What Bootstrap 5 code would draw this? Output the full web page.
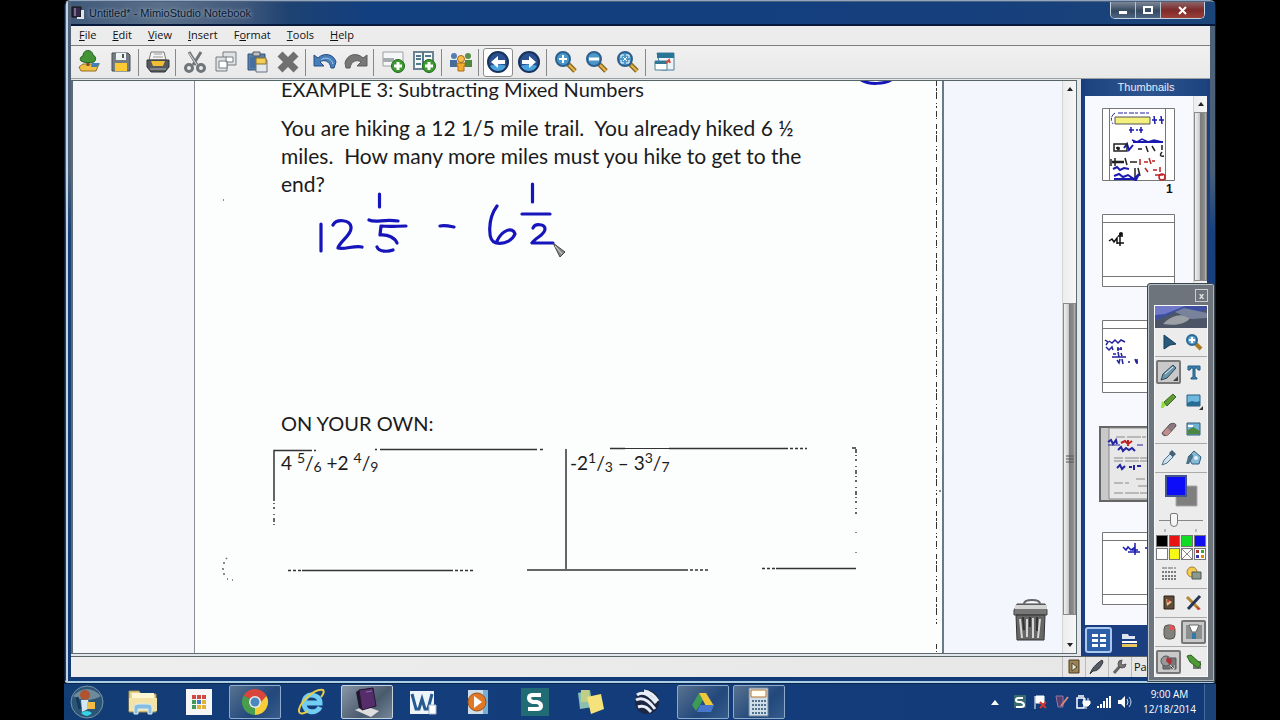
<!DOCTYPE html>
<html lang="en">
<head>
<meta charset="utf-8">
<meta name="viewport" content="width=device-width, initial-scale=1">
<title>Untitled* - MimioStudio Notebook</title>
<link href="https://cdn.jsdelivr.net/npm/bootstrap@5.3.0/dist/css/bootstrap.min.css" rel="stylesheet">
<style>
body{background:#000;font-family:"Open Sans","Noto Sans",sans-serif;font-size:11px;color:#111}
button{border:0;background:none;padding:0;display:flex;align-items:center;justify-content:center;flex:none;color:inherit}
svg{display:block;flex:none}
.desk{padding:0 64px;height:100vh;min-height:560px}
/* application window */
.appwin{background:linear-gradient(90deg,transparent 1px,#c3d2e0 1px,#c3d2e0 3px,transparent 3px),linear-gradient(#4e6178,#4a6079 25%,#17407c 34%,#123a76);border:1px solid #0b1d36;border-top-color:#8fa5c4;border-bottom:2px solid #a9cfe6;border-radius:6px 6px 4px 4px;padding:1px 5px 4px 6px;min-height:0}
.titlebar{height:25px;background:linear-gradient(90deg,#41597a,#5a7089 8%,#41597c 15%,#1e4272 19%,#123f7f 26%,#153f7d 75%,#1b4478);border-bottom:2px solid #071a3c;margin-right:-5px}
.titletext{color:#0a1830;font:11px/22px "Liberation Sans",sans-serif;text-shadow:0 0 3px #8fa3b8,0 0 4px #8fa3b8}
.winctl{border:1px solid #c5d2e0;border-top:0;border-radius:0 0 5px 5px;height:17px;margin-right:10px;align-self:flex-start;overflow:hidden}
.winctl button{width:25px;height:16px;background:linear-gradient(#7c8796,#35485f 55%,#4e6480);border-right:1px solid #b5c2d0}
.winctl button:last-child{width:43px;border:0;background:linear-gradient(#8a6468,#7e2a2a 50%,#9a4038)}
.menus{height:20px;background:#ececec;border-bottom:1px solid #7d7d7d}
.menus a{padding:0 8px;color:#111;text-decoration:none;line-height:18px;font-size:11px;font-weight:500}
.tools{height:34px;background:linear-gradient(#f0f0f0,#e9e9e9);border-bottom:1px solid #9aa0a0}
.tools button{width:30px;height:29px;border-radius:3px;margin-right:1px}
.tools .pressed{background:#fff;border:1px solid #8c8c8c}
.rule{width:1px;height:27px;background:#888;margin:0 4px 0 1px}
.workarea{background:#e3e7ec;min-height:0}
.board{border:1px solid #5c6c70;border-width:1px 1px 1px 2px;border-top-color:#556565;background:#f4f7fc;min-width:0;margin:1px 4px 2px 0}
.leftpad{width:122px;border-right:1px solid #8a8e96;background:#f4f6fa}
.rightpad{width:120px;border-left:2px solid #6a7986;background:#f3f6fd}
.sheet{background:#fcfdfd;overflow:hidden;min-width:0;padding-left:78px;font-family:Lato,"Open Sans",sans-serif;color:#1b1b1b;font-size:20px}
.sheet h1,.sheet h2,.sheet p{font-size:20px;font-weight:400;margin:0;line-height:28px;padding-left:8px;white-space:pre}
.sheet h1{line-height:16px}
.sheet p{margin-top:17px;font-size:21px}
.sheet h2{margin-top:211px;margin-bottom:12px}
.tasks{width:582px}
.tasks div{width:50%;padding-left:8px;height:122px;line-height:28px;font-size:19px;white-space:pre}
.tasks .second{padding-left:6px}
.tasks sup,.tasks sub{font-size:14px;line-height:0}
.tasks sub{bottom:-2px}
.overlay{position:absolute;left:0;top:0}
.vbar{width:14px;background:linear-gradient(90deg,#ededed,#f6f6f6);border-left:1px solid #d5d5d5}
.vbar .btn-arrow{height:16px;width:100%}
.vbar .grip{background:linear-gradient(90deg,#f0f0f0 0,#cfcfcf 40%,#7d7d7d 50%,#8c8c8c 85%,#bbb);border:1px solid #8a8a8a}
.sidepanel{width:129px;background:#1b3e80;padding:0 3px 0 3px;border-left:1px solid #24346e}
.sidetitle{height:17px;line-height:17px;color:#e4edfa;font:500 11px/17px "Liberation Sans",sans-serif;background:linear-gradient(90deg,#1d437f,#2f5590,#1d437f)}
.list{background:#f7f9fe;overflow:hidden;min-height:0}
.thumbs{padding:12px 0 0 17px}
.thumbs figure{margin:0;height:106px}
.thumbs figcaption{font:bold 12px/16px "Liberation Sans",sans-serif;padding-left:64px}
.paneltabs{height:31px}
.paneltabs button{width:27px;height:26px;border-radius:3px}
.paneltabs .chosen{background:#2d5ea8;border:2px solid #a9c8ee}
.statusbar{height:22px;background:linear-gradient(90deg,#eee,#e6e6e6);border-top:1px solid #5c6468;padding-right:61px}
.statusbar button,.statusbar span{border-left:1px solid #bbb}
.statusbar button{width:23px;height:20px}
.statusbar span{width:18px;padding-left:2px;line-height:20px;font-size:11px}
/* floating palette */
.kit{position:absolute;right:0;bottom:-1px;width:68px;padding:2px 6px 4px 6px;background:#6d747b;border:1px solid #3c444c;box-shadow:inset 1px 1px 0 #b7c0c6,inset -1px -1px 0 #aab4bb;border-radius:3px 3px 0 0}
.kithead{height:19px}
.kithead button{width:13px;height:13px;border:1px solid #ccc;color:#eee;font:bold 9px/10px "Liberation Sans",sans-serif}
.kitbody{background:#ececec;border:1px solid #fafafa}
.pair{height:29px;padding:0 1px;display:flex;justify-content:space-around;align-items:center}
.pair button{width:25px;height:24px}
.line-under{border-bottom:1px solid #aaa}
.down{background:#c9c9c9;border:2px solid #777!important;border-radius:2px}
.swatches{display:grid;grid-template-columns:repeat(4,1fr);gap:1px;padding:0 1px;height:25px}
.swatches button{height:12px;width:100%;border:1px solid #777}
.kit input[type=range]{appearance:none;width:44px;height:14px;background:linear-gradient(#888,#888) center/100% 1px no-repeat;margin:0 auto;display:block}
.kit input[type=range]::-webkit-slider-thumb{appearance:none;width:8px;height:14px;border:1px solid #777;border-radius:2px 2px 4px 4px;background:#f5f5f5}
/* taskbar */
.taskbar{height:37px;background:linear-gradient(90deg,#123c74,#143d7b 30%,#123a78);border-top:1px solid #0c2548;color:#fff}
.taskbar .apps button{width:52px;height:34px;margin-right:4px;border-radius:2px}
.taskbar .apps .running{border:1px solid #8fa9c9;background:linear-gradient(135deg,#59728f,#22487c 60%,#355c8c)}
.taskbar .apps .front{border:1px solid #c7d2de;background:linear-gradient(135deg,#8797a8,#4a5a6d 60%,#77879a)}
.tray button{width:21px;height:30px}
.clock{width:69px;font-size:10px;line-height:15px;text-align:center}
.peek{width:12px;border-left:1px solid #4a6a9c;background:#1c4379}
</style>
</head>
<body>
<div class="desk d-flex flex-column">
<main class="appwin position-relative d-flex flex-column flex-grow-1">
  <header class="titlebar d-flex align-items-center">
    <svg width="14" height="14" viewBox="0 0 14 14" class="me-1"><path d="M1 1h9v10H1z" fill="#35284a" stroke="#111"/><path d="M4 2v8" stroke="#b9b3c9"/><path d="M10 4h3v9H6v-2h4z" fill="#dfe4ea"/></svg>
    <div class="titletext flex-grow-1">Untitled* - MimioStudio Notebook</div>
    <div class="winctl d-flex">
      <button aria-label="Minimize"><svg width="10" height="8"><path d="M1 5h8v3H1z" fill="#fff"/></svg></button>
      <button aria-label="Maximize"><svg width="10" height="8"><path d="M1 1h8v6H1z" fill="none" stroke="#fff" stroke-width="2"/></svg></button>
      <button aria-label="Close"><svg width="10" height="9"><path d="M1 1l7 7M8 1L1 8" stroke="#fff" stroke-width="2"/></svg></button>
    </div>
  </header>
  <nav class="menus d-flex">
    <a href="#"><u>F</u>ile</a><a href="#"><u>E</u>dit</a><a href="#"><u>V</u>iew</a><a href="#"><u>I</u>nsert</a><a href="#">F<u>o</u>rmat</a><a href="#"><u>T</u>ools</a><a href="#"><u>H</u>elp</a>
  </nav>
  <div class="tools d-flex align-items-center ps-1">
    <button aria-label="Open"><svg width="24" height="24" viewBox="0 0 24 24"><path d="M1 17l4-3h16l-3 7H3z" fill="#f2bf45" stroke="#94702a"/><path d="M14 13h8l-3 4h-6z" fill="#3f7fb5"/><path d="M10 10v6" stroke="#7b5322" stroke-width="3"/><path d="M3 11a3 3 0 0 1 2-5 5 5 0 0 1 10-1 4 4 0 0 1 1 7c-4 1-10 1-13-1z" fill="#429434" stroke="#226322"/></svg></button>
    <button aria-label="Save"><svg width="24" height="24" viewBox="0 0 24 24"><path d="M3 3h16l2 2v16H3z" fill="#747b82" stroke="#484e55"/><path d="M7 3h10v7H7z" fill="#eef3f5"/><path d="M13 4h2v4h-2z" fill="#555"/><path d="M6 13h12v8H6z" fill="#fac933"/></svg></button>
    <span class="rule"></span>
    <button aria-label="Print"><svg width="24" height="24" viewBox="0 0 24 24"><path d="M5 2h13l2 8H3z" fill="#f4f4f4" stroke="#777"/><path d="M8 4h8M7 7h10" stroke="#999"/><path d="M1 10h22v7l-4 5H5l-4-5z" fill="#55595e" stroke="#303438"/><path d="M5 11h14l-2 5H7z" fill="#f0bd35"/><path d="M4 19h16" stroke="#a9b0b5"/></svg></button>
    <span class="rule"></span>
    <button aria-label="Cut"><svg width="24" height="24" viewBox="0 0 24 24" fill="none" stroke="#70757a"><path d="M6 2l8 13M18 2l-8 13" stroke-width="3"/><path d="M6 3l8 12" stroke="#ddd"/><circle cx="6" cy="18" r="3.5" stroke-width="3"/><circle cx="18" cy="18" r="3.5" stroke-width="3"/></svg></button>
    <button aria-label="Copy"><svg width="24" height="24" viewBox="0 0 24 24" fill="#dfe2e4" stroke="#777d82"><path d="M9 2h13v13H9z"/><path d="M2 7h11v14H2z"/><path d="M5 11h8v7H5zM12 7h7v5h-7z" fill="#fff"/></svg></button>
    <button aria-label="Paste"><svg width="24" height="24" viewBox="0 0 24 24"><path d="M3 4h17v16H3z" fill="#5a7fab" stroke="#34557e"/><path d="M8 2h7v4H8z" fill="#bbc4cc" stroke="#555"/><path d="M5 7h8v11H5z" fill="#466e9f"/><path d="M11 10h11v12H11z" fill="#e3e8ec" stroke="#68727c"/><path d="M11 8h10v6H11z" fill="#f3cd56" stroke="#86702c"/></svg></button>
    <button aria-label="Delete"><svg width="24" height="24" viewBox="0 0 24 24"><path d="M4 4l16 16M20 4L4 20" stroke="#707070" stroke-width="7"/></svg></button>
    <span class="rule"></span>
    <button aria-label="Undo"><svg width="24" height="24" viewBox="0 0 24 24"><path d="M1 5v11h10l-4-4c4-3 10-1 11 6h3l2-6C21 4 11 2 5 8z" fill="#477fba" stroke="#264f83"/><path d="M8 10c5-4 11-1 12 4" stroke="#a8caea" fill="none"/></svg></button>
    <button aria-label="Redo"><svg width="24" height="24" viewBox="0 0 24 24"><path d="M23 5v11H13l4-4c-4-3-10-1-11 6H2l-1-5C3 4 13 2 19 8z" fill="#777" stroke="#5d5d5d"/></svg></button>
    <span class="rule"></span>
    <button aria-label="New page"><svg width="24" height="24" viewBox="0 0 24 24"><path d="M2 2h20v14H2z" fill="#f5f7f8" stroke="#9ba1a5"/><path d="M2 8h11v4H2z" fill="#a5adb1"/><circle cx="17" cy="16" r="6.5" fill="#3f992f" stroke="#1b691b"/><path d="M17 12v8M13 16h8" stroke="#fff" stroke-width="3"/></svg></button>
    <button aria-label="Page layout"><svg width="24" height="24" viewBox="0 0 24 24"><path d="M2 2h19v17H2z" fill="#f7f8f9" stroke="#6e8392" stroke-width="2"/><path d="M11 2v17M4 6h5M4 9h5M13 6h6M4 14h5" stroke="#54798e" stroke-width="2"/><circle cx="17" cy="16" r="6.5" fill="#3f992f" stroke="#1b691b"/><path d="M17 12v8M13 16h8" stroke="#fff" stroke-width="3"/></svg></button>
    <span class="rule"></span>
    <button aria-label="Teams"><svg width="24" height="24" viewBox="0 0 24 24"><circle cx="5" cy="6" r="3" fill="#547eb2"/><path d="M1 10h7v7H1z" fill="#426c9e"/><circle cx="19" cy="6" r="3" fill="#58914b"/><path d="M16 10h7v7h-7z" fill="#4f873b"/><circle cx="12" cy="9" r="3.5" fill="#f9bb4a" stroke="#a56c16"/><path d="M8 13h8v3h-1v5H9v-5H8z" fill="#f4ab2d" stroke="#a56c16"/></svg></button>
    <span class="rule"></span>
    <button class="pressed" aria-label="Previous"><svg width="24" height="24" viewBox="0 0 24 24"><circle cx="12" cy="12" r="10" fill="#2a5090" stroke="#17335e" stroke-width="2"/><path d="M4 16a9 9 0 0 0 16 0c-5-2-11-2-16 0z" fill="#4aa3dc"/><path d="M5 12l7-6v4h7v4h-7v4z" fill="#fff"/></svg></button>
    <button aria-label="Next"><svg width="24" height="24" viewBox="0 0 24 24"><circle cx="12" cy="12" r="10" fill="#2a5090" stroke="#17335e" stroke-width="2"/><path d="M4 16a9 9 0 0 0 16 0c-5-2-11-2-16 0z" fill="#4aa3dc"/><path d="M19 12l-7-6v4H5v4h7v4z" fill="#fff"/></svg></button>
    <span class="rule"></span>
    <button aria-label="Zoom in"><svg width="24" height="24" viewBox="0 0 24 24"><path d="M14 14l7 7" stroke="#8c6a26" stroke-width="5"/><path d="M15 15l6 6" stroke="#e5b64b" stroke-width="2"/><circle cx="9" cy="9" r="7" fill="#4c97c9" stroke="#2c5f8d" stroke-width="2"/><path d="M9 5v8M5 9h8" stroke="#fff" stroke-width="2"/></svg></button>
    <button aria-label="Zoom out"><svg width="24" height="24" viewBox="0 0 24 24"><path d="M14 14l7 7" stroke="#8c6a26" stroke-width="5"/><path d="M15 15l6 6" stroke="#e5b64b" stroke-width="2"/><circle cx="9" cy="9" r="7" fill="#4c97c9" stroke="#2c5f8d" stroke-width="2"/><path d="M4 9h10" stroke="#fff" stroke-width="3"/></svg></button>
    <button aria-label="Zoom to fit"><svg width="24" height="24" viewBox="0 0 24 24"><path d="M14 14l7 7" stroke="#8c6a26" stroke-width="5"/><path d="M15 15l6 6" stroke="#e5b64b" stroke-width="2"/><circle cx="9" cy="9" r="7" fill="#4c97c9" stroke="#2c5f8d" stroke-width="2"/><path d="M5 8V5h3M10 5h3v3M13 10v3h-3M8 13H5v-3M7 7l4 4M11 7l-4 4" stroke="#fff" fill="none"/></svg></button>
    <span class="rule"></span>
    <button aria-label="Screen view"><svg width="24" height="24" viewBox="0 0 24 24"><path d="M4 3h17v17H8z" fill="#eef4f6" stroke="#4b7f9d"/><path d="M4 3h17v5H4z" fill="#287597"/><path d="M2 11h12v9H2z" fill="#fff" stroke="#4b8299"/><path d="M2 11h12v3H2z" fill="#2e7898"/><path d="M13 13l3-3 1 3" stroke="#d64a3a" fill="none" stroke-width="2"/></svg></button>
  </div>
  <div class="workarea d-flex flex-grow-1">
    <section class="board position-relative d-flex flex-grow-1">
      <div class="leftpad flex-shrink-0"></div>
      <article class="sheet position-relative flex-grow-1">
        <h1>EXAMPLE 3: Subtracting Mixed Numbers</h1>
        <p>You are hiking a 12 1/5 mile trail.  You already hiked 6 ½
miles.  How many more miles must you hike to get to the
end?</p>
        <h2>ON YOUR OWN:</h2>
        <div class="tasks d-flex"><div>4 <sup>5</sup>/<sub>6</sub> +2 <sup>4</sup>/<sub>9</sub></div><div class="second">-2<sup>1</sup>/<sub>3</sub> – 3<sup>3</sup>/<sub>7</sub></div></div>
        <svg class="overlay" width="746" height="572" viewBox="195 82 746 572" fill="none">
          <g stroke="#333" stroke-width="1.5">
            <path d="M274 498V451.500H312M380 450.500H537M566 450V570M610 449.500H625M669 449.500H785M302 571.500H450M527 571H685M776 569.500H856M852 449h4"/>
            <path d="M314 451.500h2M375 450.500h2M540 450.500h4M450 571.500h24M685 571h24M762 569.500h14M785 449.500h22M288 571.500h14" stroke-dasharray="3 2"/>
            <path d="M625 449.500H669" stroke-width="1"/>
            <path d="M274 498v30M856 450v65" stroke-dasharray="4 2 1 3 2 5 1 3"/>
            <path d="M856 533v1M856 553v1M226 559l1 1M223 564h2M222 570h2M223 575h2M227 580h1M232 581h1M223 201h1M939 492h2" stroke="#666"/>
            <path d="M936.500 82V626M936.500 645v8" stroke-width="1" stroke-dasharray="5 2 3 1 7 4 1 2 2 3 6 1 1 5"/>
          </g>
          <g stroke="#1614bb" stroke-width="3.200" stroke-linecap="round" stroke-linejoin="round">
            <path d="M321 225v27M333 226c3-6 17-6 18 2 1 8-11 14-13 21 6 2 17-3 24-1M379.500 195v13M369 221c7 3 14-1 29 1M406 227c-9 0-15 1-25 0l-1 9c8-1 15 3 17 8M377 248c2 5 11 5 16 3M440 227c5-1 9 0 14 1M497 207c-9 12-10 35-1 37 10 2 17-4 19-9-2-8-13-4-18 7M532.500 185v18M522 215h28M533 229c2-5 12-4 12 1 0 6-9 8-13 14h21"/>
            <path d="M861 81c8 5 24 4 30 0" stroke-width="3"/>
          </g>
          <path d="M553 244l12 9-5 5z" fill="#888" stroke="#444"/><path d="M555 247l7 8" stroke="#ddd"/>
        </svg>
      </article>
      <div class="rightpad flex-shrink-0"></div>
      <svg class="position-absolute bottom-0 end-0 me-4 mb-2" width="42" height="46" viewBox="0 0 42 46"><path d="M6 8l1-3h28l2 6v5H4v-5z" fill="#777" stroke="#444"/><path d="M14 5q0-4 8-4t8 4" fill="none" stroke="#666" stroke-width="2"/><path d="M5 6h32v4H5z" fill="#d5d5d5"/><path d="M6 16h29l-1 25H7z" fill="#666" stroke="#333"/><path d="M10 20l2 19M17 20v18M23 19v20M30 20l-2 19" stroke="#d6d6d6" stroke-width="2"/><path d="M13 18l1 13M20 18v10M27 18v14" stroke="#333" stroke-width="2"/></svg>
      <div class="vbar flex-shrink-0 d-flex flex-column">
        <button class="btn-arrow" aria-label="Scroll up"><svg width="6" height="4"><path d="M0 4l3-4 3 4z" fill="#222"/></svg></button>
        <div style="flex:206"></div><div class="grip d-flex align-items-center justify-content-center" style="flex:311"><svg width="8" height="8"><path d="M0 1h8M0 4h8M0 7h8" stroke="#555"/></svg></div><div style="flex:22"></div>
        <button class="btn-arrow" aria-label="Scroll down"><svg width="6" height="4"><path d="M0 0h6L3 4z" fill="#222"/></svg></button>
      </div>
    </section>
    <aside class="sidepanel d-flex flex-column flex-shrink-0">
      <div class="sidetitle text-center">Thumbnails</div>
      <div class="list d-flex flex-grow-1">
        <div class="thumbs flex-grow-1">
          <figure><svg width="73" height="73" viewBox="0 0 73 73"><path d="M.5.500h72v72H.5zM7.500 0v73M63.500 0v73" fill="#fff" stroke="#777"/><path d="M13 9h35v7H13z" fill="#f4f07e" stroke="#555"/><path d="M13 5q-6 4-2 11M16 5h32" stroke="#229" fill="none" stroke-dasharray="5 1 3 2"/><g stroke="#1a1ab0" stroke-width="1.500" fill="none"><path d="M50 12h5M52 8l1 8M57 12h5M59 8l1 8M27 22h5M29 19v6M34 22h2M37 22h4M39 19v6"/><path d="M31 34h30M22 40l3-4 2 6 4-5M11 61l4-2 3 3 4-2 5 1M12 68l5-2 4 3 5-2 6 4 5-5-3 6-6-2M12 71h20" stroke-width="2"/><path d="M30 32l5 2 5-3 6 3 6-2 8 2"/></g><g stroke="#222" stroke-width="1.500" fill="none"><path d="M12 36h13v7H12zM14 40h4M36 41h4M44 38l2 6M50 38l3 5M60 37v5M9 51v7M13 50v8M17 54h4M23 50l2 7M28 54h7M33 60v9M36 60l2 8M60 44q-4 5 2 4"/><path d="M15 39l2 3M10 54h12" stroke-width="2.500"/></g><g stroke="#b22" stroke-width="1.500" fill="none"><path d="M38 51v6M42 54h4M47 50l2 6M50 53h3M43 60l3 4M51 62h4M58 59v5M53 67h8"/><circle cx="60" cy="69" r="3"/></g></svg><figcaption>1</figcaption></figure>
          <figure><svg width="73" height="73" viewBox="0 0 73 73"><path d="M.5.500h72v72H.5zM0 8.500h73M0 62.500h73" fill="#fff" stroke="#777"/><path d="M7 27l3-2 2 3 3-4v6M16 22h5M18 19v13M15 29h7" stroke="#111" fill="none" stroke-width="1.500"/><circle cx="19" cy="20" r="2" fill="#111"/></svg></figure>
          <figure><svg width="73" height="73" viewBox="0 0 73 73"><path d="M.5.500h72v72H.5zM0 8.500h73M0 62.500h73" fill="#fff" stroke="#777"/><path d="M3 20l3 2-2 3M7 21l3 2 3-3 3 3 3-3 4 2M4 27l3 3 3-3 1 3M16 27v4M19 27v3M15 29h5M11 34h3M16 32l1 5M19 33l1 3M10 37h14M15 40l2 3 1-4M20 39l1 5M26 42h2M33 39l1 3h2M35 39v5" stroke="#229" stroke-width="1.500" fill="none"/></svg></figure>
          <figure><svg width="76" height="76" viewBox="3 1 76 76" style="margin-left:-3px"><path d="M4 2h75v74H4z" fill="#c9c9c9" stroke="#666" stroke-width="2"/><path d="M13 3h66v71H13z" fill="#e8e8e8" stroke="#888"/><path d="M20 12h30M18 33h60M18 36h60M18 58h15M18 68h55M40 54h30M42 61h30" stroke="#888" stroke-dasharray="9 2 14 1"/><path d="M12 17l3-2 2 4 3-4 1 4M22 25l3-3 2 4 3-3 3 2 3-2 3 3M21 43l3-3 2 4 3-3M33 42h3M38 40v5M41 41h4" stroke="#2525a0" stroke-width="2" fill="none"/><path d="M12 20h12M41 20h6" stroke="#2525a0"/><path d="M25 18l4-2 3 3 4-3M32 15v6" stroke="#b22" stroke-width="2" fill="none"/></svg></figure>
          <figure><svg width="73" height="73" viewBox="0 0 73 73"><path d="M.5.500h72v72H.5zM0 8.500h73M0 62.500h73" fill="#fff" stroke="#777"/><path d="M21 15l3 3 2-3 3 3 4-3M26 20h12M33 11v12M30 18h6M43 16h2" stroke="#1a1ab0" fill="none" stroke-width="1.500"/></svg></figure>
        </div>
        <div class="vbar flex-shrink-0 d-flex flex-column"><button class="btn-arrow" aria-label="Scroll up"><svg width="6" height="4"><path d="M0 4l3-4 3 4z" fill="#222"/></svg></button><div class="grip" style="flex:165"></div><div style="flex:342"></div></div>
      </div>
      <div class="paneltabs d-flex align-items-center gap-1">
        <button class="chosen" aria-label="Thumbnails"><svg width="16" height="14"><path d="M1 1h6v3H1zM9 1h6v3H9zM1 6h6v3H1zM9 6h6v3H9zM1 11h6v3H1zM9 11h6v3H9z" fill="#fff"/></svg></button>
        <button aria-label="Gallery"><svg width="18" height="16"><path d="M1 2h6l1 2h6v3H1z" fill="#dbe4f0"/><path d="M1 9h15v2H1z" fill="#fff"/><path d="M1 12h15v3H1z" fill="#e9c55d"/></svg></button>
      </div>
    </aside>
  </div>
  <footer class="statusbar d-flex justify-content-end align-items-center">
    <button aria-label="Notebook"><svg width="14" height="16"><path d="M2 1h10v13H2z" fill="#9a8357" stroke="#4d3d20"/><path d="M5 4l5 4-5 4z" fill="#f1e6c5" stroke="#443"/></svg></button>
    <button aria-label="Pen"><svg width="16" height="16"><path d="M1 15c2-6 6-10 12-14l1 2c-3 7-6 9-10 9z" fill="#545b68" stroke="#333"/></svg></button>
    <button aria-label="Settings"><svg width="16" height="16"><path d="M2 14l7-8" stroke="#666" stroke-width="3"/><path d="M14 5a4 4 0 1 1-4-4l-1 4 2 1z" fill="#777" stroke="#555"/></svg></button>
    <span>Pa</span>
  </footer>

  <section class="kit" aria-label="Tools">
    <div class="kithead d-flex justify-content-end align-items-center"><button aria-label="Close tools">x</button></div>
    <div class="kitbody">
      <svg width="100%" height="22" viewBox="0 0 52 22" preserveAspectRatio="none"><path d="M0 0h52v22H0z" fill="#3f4fa0"/><path d="M0 0h30L10 8 0 9z" fill="#7078c8"/><path d="M0 22V15l20-9 16 5 16-8v19z" fill="#4c5566"/><path d="M8 18c8-9 20-11 27-6-4 6-14 8-27 6z" fill="#9aa0a4"/><path d="M20 6l9-4 23 5v5l-16 1z" fill="#78829a"/></svg>
      <div class="pair line-under"><button aria-label="Select"><svg width="18" height="18"><path d="M4 2l12 9-6 1-6 4z" fill="#285a7c" stroke="#173c58"/></svg></button><button aria-label="Zoom"><svg width="18" height="18"><path d="M10 10l6 6" stroke="#a87a25" stroke-width="4"/><circle cx="7" cy="7" r="5" fill="#5fa8d4" stroke="#2c6796" stroke-width="2"/><path d="M7 4v6M4 7h6" stroke="#fff" stroke-width="2"/></svg></button></div>
      <div class="pair"><button class="down" aria-label="Pen"><svg width="20" height="20"><path d="M2 18l2-6L14 3l3 3L8 16z" fill="#6e96aa" stroke="#294758"/><path d="M6 12l8-7" stroke="#e5f2f7"/><path d="M19 14v5h-5z" fill="#444"/></svg></button><button aria-label="Text"><svg width="18" height="18"><path d="M3 3h12v4h-2l-1-2h-2v9l2 1v1H6v-1l2-1V5H6L5 7H3z" fill="#3d82b0" stroke="#225b85"/></svg></button></div>
      <div class="pair"><button aria-label="Highlighter"><svg width="18" height="18"><path d="M2 9l4 4-3 3H1z" fill="#8fe03a"/><path d="M4 10L13 2l3 3-9 9z" fill="#5f9c35" stroke="#3c6a22"/></svg></button><button aria-label="Shape"><svg width="18" height="18"><path d="M2 3h13v11H2z" fill="#6db8dc" stroke="#2b5f82"/><path d="M2 11l5-2 4 1 4-1v5H2z" fill="#286b94"/><path d="M18 14v4h-4z" fill="#333"/></svg></button></div>
      <div class="pair line-under"><button aria-label="Eraser"><svg width="18" height="18"><path d="M2 13l8-9q6-2 6 2l-8 9q-5 2-6-2z" fill="#8a7a80" stroke="#5b5055"/><path d="M3 13l4-5 4 4-4 4z" fill="#c38d90"/></svg></button><button aria-label="Picture"><svg width="18" height="18"><path d="M2 3h13v12H2z" fill="#6fb2d8" stroke="#355d70"/><path d="M3 10l5-3 7 4v3H3z" fill="#4c8640"/><path d="M3 5h5v2H3z" fill="#fff"/></svg></button></div>
      <div class="pair line-under"><button aria-label="Colour picker"><svg width="18" height="18"><path d="M2 16l2-5 6-6 3 3-6 6z" fill="#cde2ec" stroke="#4d7188"/><path d="M9 4l3-3 4 4-3 3z" fill="#42617a"/></svg></button><button aria-label="Fill"><svg width="18" height="18"><path d="M3 8l6-6 7 6-2 7H7z" fill="#86b9d6" stroke="#31617f"/><path d="M3 8q5-6 5 0l-4 7H1z" fill="#4b7289"/><circle cx="11" cy="9" r="2" fill="#e7f3fa"/></svg></button></div>
      <svg class="mx-auto" width="50" height="40" viewBox="0 0 50 40"><path d="M20 13h21v20H20z" fill="#7f7f7f" stroke="#aaa"/><path d="M10 3h20v20H10z" fill="#0d0dfa" stroke="#46568d" stroke-width="2"/></svg>
      <input type="range" min="0" max="10" value="3" aria-label="Line thickness">
      <svg class="mx-auto" width="44" height="8"><path d="M6 2v3M37 2v3" stroke="#888"/></svg>
      <div class="swatches"><button style="background:#000" aria-label="Black"></button><button style="background:#e81313" aria-label="Red"></button><button style="background:#0fdc23" aria-label="Green"></button><button style="background:#1010ee" aria-label="Blue"></button><button style="background:#fff" aria-label="White"></button><button style="background:#f8f814" aria-label="Yellow"></button><button style="background:#fff" aria-label="No colour"><svg width="10" height="10"><path d="M0 0l10 10M10 0L0 10" stroke="#888"/></svg></button><button style="background:#fff" aria-label="More colours"><svg width="10" height="10"><path d="M1 1h3v3H1z" fill="#a33"/><path d="M6 1h3v3H6z" fill="#3a3"/><path d="M1 6h3v3H1z" fill="#33a"/><path d="M6 6h3v3H6z" fill="#e80"/></svg></button></div>
      <div class="pair line-under"><button aria-label="Line style"><svg width="18" height="16"><path d="M2 2h14" stroke="#666" stroke-dasharray="5 1"/><path d="M2 6h14M2 10h14M2 13h14" stroke="#555" stroke-width="1.500" stroke-dasharray="2 1"/></svg></button><button aria-label="Arrange"><svg width="18" height="18"><circle cx="7" cy="7" r="5" fill="#f4cb51" stroke="#a78028"/><path d="M7 7h9v7H7z" fill="#8b9a8e" stroke="#4c584e"/></svg></button></div>
      <div class="pair line-under"><button aria-label="Gallery"><svg width="18" height="18"><path d="M4 2h10v13H4z" fill="#5e4c39" stroke="#2c2219"/><path d="M6 5l6 3-5 4z" fill="#e3c38a"/><circle cx="8" cy="7" r="1.500" fill="#c44"/></svg></button><button aria-label="Applications"><svg width="18" height="18"><path d="M2 3l12 12" stroke="#b18731" stroke-width="3"/><path d="M15 2L3 15" stroke="#273556" stroke-width="3"/><path d="M11 12l5 3-3 1z" fill="#c33"/></svg></button></div>
      <div class="pair line-under"><button aria-label="Mouse"><svg width="18" height="18"><rect x="4" y="2" width="11" height="14" rx="4" fill="#83817c" stroke="#555"/><path d="M9 2h3q3 1 3 5H9z" fill="#d55"/></svg></button><button class="down" aria-label="Spotlight"><svg width="20" height="18"><path d="M2 2h16v14H2z" fill="#8b8f90"/><path d="M5 2h10l-3 7H8z" fill="#fff" stroke="#666"/><path d="M8 10h4v6H8z" fill="#317ba5"/></svg></button></div>
      <div class="pair"><button class="down" aria-label="Record"><svg width="20" height="18"><path d="M4 5h13v11H4z" fill="#777" stroke="#555"/><circle cx="7" cy="8" r="5" fill="#999" stroke="#555"/><path d="M8 4l5 3-2 5-4-4z" fill="#b32e35"/><path d="M11 12l4 4M15 12v4h-4" stroke="#ddd"/></svg></button><button aria-label="Capture"><svg width="18" height="18"><path d="M8 8h8v8H8z" fill="#777"/><path d="M2 3l4-1 10 9-3 4-8-6z" fill="#4e9a35" stroke="#2c641d"/></svg></button></div>
    </div>
  </section>
</main>

<footer class="taskbar d-flex flex-shrink-0 align-items-stretch">
  <div class="apps d-flex flex-grow-1 align-items-center">
    <button style="margin-left:-3px" aria-label="Start"><svg width="36" height="34"><circle cx="18" cy="17" r="16" fill="#2b5577" stroke="#7893a5"/><path d="M4 11q14-14 28 0-14 8-28 0z" fill="#708a9a"/><circle cx="16" cy="10" r="5" fill="#b0532e"/><path d="M12 15h7l2 8-8 4z" fill="#d5e7f2"/><path d="M18 17h8v7h-8z" fill="#f1bd45"/><path d="M12 28q6-4 11 0-5 6-11 0z" fill="#35d4e8"/><path d="M8 12l3 12" stroke="#173857" stroke-width="3"/></svg></button>
    <button aria-label="Explorer"><svg width="32" height="30"><path d="M2 4h10l2 3h15v18H2z" fill="#ead693" stroke="#a9914c"/><path d="M5 6h22v6H5z" fill="#fff7d2"/><path d="M2 11h28v13H2z" fill="#f3e3a6"/><path d="M7 27v-7q0-3 4-3h10q4 0 4 3v7h-4v-5H11v5z" fill="#87bedf" stroke="#d8effa"/></svg></button>
    <button aria-label="Apps"><svg width="26" height="26"><path d="M0 0h26v26H0z" fill="#f6f6f6"/><path d="M6 6h4v4H6zM11 6h4v4h-4zM16 6h4v4h-4z" fill="#cf4a42"/><path d="M6 11h4v4H6z" fill="#46995a"/><path d="M11 11h4v4h-4z" fill="#457cc4"/><path d="M16 11h4v4h-4z" fill="#ddb43a"/><path d="M6 16h4v4H6z" fill="#46995a"/><path d="M11 16h4v4h-4zM16 16h4v4h-4z" fill="#e2b23a"/></svg></button>
    <button class="running" aria-label="Chrome"><svg width="28" height="28" viewBox="-14 -14 28 28"><path d="M0 0L-11.260-6.500A13 13 0 0 1 11.260-6.500z" fill="#d9473c"/><path d="M0 0L11.260-6.500A13 13 0 0 1 0 13z" fill="#f5cd38"/><path d="M0 0L0 13A13 13 0 0 1-11.260-6.500z" fill="#4a9d4c"/><path d="M0-6H11.500L6 0z" fill="#d9473c"/><circle r="6" fill="#eee"/><circle r="4.500" fill="#4a88bf"/></svg></button>
    <button aria-label="Internet Explorer"><svg width="30" height="30" fill="none"><path d="M24 20c-3 7-16 7-16-4s16-10 16 0H9" stroke="#72cdf2" stroke-width="5"/><path d="M3 25C2 17 18 1 27 3c2 2-1 6-2 7M3 25c2 3 6 1 9-1" stroke="#e8cc45" stroke-width="2"/></svg></button>
    <button class="front" aria-label="MimioStudio"><svg width="32" height="32"><path d="M4 24l10-4 14 5-8 6z" fill="#dedede"/><path d="M8 4l14-2 3 18-14 4z" fill="#552d6b" stroke="#261631"/><path d="M8 4l3 20-3-2-3-16z" fill="#21162a"/><path d="M15 6l6-1" stroke="#8d6ba3"/></svg></button>
    <button aria-label="Word"><svg width="28" height="28"><path d="M1 3h24v20l-3 3H1z" fill="#edf4fa"/><path d="M3 6l4 15h3l3-10 3 10h3l4-15" fill="none" stroke="#275a91" stroke-width="3"/><path d="M20 17h7v9h-7z" fill="#fff" stroke="#a8bacb"/></svg></button>
    <button aria-label="Media Player"><svg width="28" height="28"><path d="M3 2h19v24H3z" fill="#cddde9"/><path d="M18 2h5v24h-5z" fill="#77aed3"/><circle cx="12" cy="14" r="9" fill="#e07826" stroke="#9b521c"/><path d="M9 8l8 6-8 6z" fill="#fff"/></svg></button>
    <button aria-label="Snagit"><svg width="28" height="28"><path d="M0 0h28v28H0z" fill="#216b74"/><path d="M20 7h-8q-4 0-4 3t4 4h4q4 1 4 4t-4 3H7" fill="none" stroke="#fff" stroke-width="4"/></svg></button>
    <button aria-label="Sticky Notes"><svg width="30" height="28"><path d="M2 5l12-3 3 17-13 2z" fill="#8abfb2"/><path d="M5 2h8v12H5z" fill="#bfcf87"/><path d="M11 9l14-3 3 15-13 5z" fill="#f6e27a"/></svg></button>
    <button aria-label="Google Earth"><svg width="28" height="28"><circle cx="14" cy="14" r="12" fill="#1b2744"/><path d="M4 7q8-6 19 8M3 12q9-5 19 9M5 19q7-3 13 5M11 3q8 1 14 10" fill="none" stroke="#e9eef6" stroke-width="3"/></svg></button>
    <button class="running" aria-label="Google Drive"><svg width="26" height="26"><path d="M9 4l4 7-7 11-4-6z" fill="#3c9b56"/><path d="M9 4h7l8 13h-8z" fill="#efc738"/><path d="M10 16h14l-3 7H7z" fill="#4776cd"/></svg></button>
    <button class="running" aria-label="Calculator"><svg width="22" height="30"><path d="M1 1h19v28H1z" fill="#cfdee9" stroke="#71879b"/><path d="M3 3h15v7H3z" fill="#fffef0" stroke="#b4722f"/><path d="M4 14h14M4 18h14M4 22h14M4 26h14" stroke="#50718e" stroke-width="2" stroke-dasharray="2 1"/></svg></button>
  </div>
  <div class="tray d-flex align-items-center">
    <button class="me-1" aria-label="Show hidden icons"><svg width="8" height="5"><path d="M0 5l4-5 4 5z" fill="#fff"/></svg></button>
    <button aria-label="Snagit"><svg width="14" height="16"><path d="M1 1h12v13H1z" fill="#376b70"/><path d="M10 4H6q-3 0-3 2t3 2h2q3 1 3 3t-3 2H3" stroke="#fff" stroke-width="2" fill="none"/></svg></button>
    <button aria-label="Action centre"><svg width="16" height="16"><path d="M2 2v13M3 2h8v7H3z" fill="#fff" stroke="#fff"/><path d="M7 8l6 6M13 8l-6 6" stroke="#d43632" stroke-width="2"/></svg></button>
    <button aria-label="Tablet"><svg width="16" height="16"><path d="M2 2h7v11H4z" fill="#573d6d" stroke="#8f78a4"/><path d="M7 12l7-9" stroke="#d08a7c" stroke-width="2"/></svg></button>
    <button aria-label="Power"><svg width="16" height="16"><path d="M3 2h6M2 4h7v10H2z" fill="none" stroke="#fff" stroke-width="1.500"/><path d="M8 7h7v3l-2 2h-3l-2-2zM10 4v3M13 4v3M11 12v3" fill="#fff" stroke="#fff"/></svg></button>
    <button aria-label="Network"><svg width="16" height="16"><path d="M1 12h2v2H1zM4 10h2v4H4zM7 7h2v7H7zM10 4h2v10h-2zM13 2h2v12h-2z" fill="#fff"/></svg></button>
    <button aria-label="Volume"><svg width="16" height="16"><path d="M1 6h3l4-4v12l-4-4H1z" fill="#fff"/><path d="M10 5q2 3 0 6M12 3q4 5 0 10" stroke="#ccd9e8" fill="none"/></svg></button>
  </div>
  <div class="clock d-flex flex-column justify-content-center"><span>9:00 AM</span><span>12/18/2014</span></div>
  <div class="peek"></div>
</footer>
</div>
<script src="https://cdn.jsdelivr.net/npm/bootstrap@5.3.0/dist/js/bootstrap.bundle.min.js"></script>
</body>
</html>
